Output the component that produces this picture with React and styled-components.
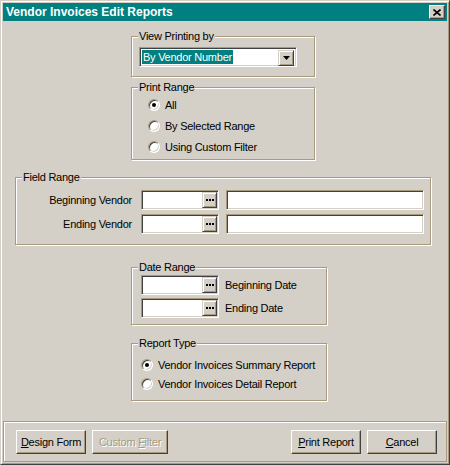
import React from "react";
import styled, { createGlobalStyle } from "styled-components";

const FACE = "#d4d0c8";
const SHADOW = "#a89a7e";
const DARK = "#404040";

const GlobalStyle = createGlobalStyle`
  html, body {
    margin: 0;
    padding: 0;
    background: ${FACE};
  }
  * {
    box-sizing: border-box;
  }
  body {
    font-family: "Liberation Sans", Arial, sans-serif;
    font-size: 11px;
    letter-spacing: -0.25px;
    color: #000;
  }
`;

const Window = styled.div`
  width: 450px;
  height: 465px;
  background: ${FACE};
  border: 1px solid;
  border-color: ${FACE} ${DARK} ${DARK} ${FACE};
  box-shadow: inset 1px 1px #fff, inset -1px -1px ${SHADOW};
  padding: 2px;
  display: flex;
  flex-direction: column;
`;

const TitleBar = styled.div`
  height: 18px;
  flex: none;
  background: #008080;
  display: flex;
  align-items: center;
  padding: 0 2px 0 3px;
`;

const Title = styled.div`
  color: #fff;
  font-weight: bold;
  font-size: 12px;
  letter-spacing: 0;
  line-height: 14px;
`;

const CloseButton = styled.div`
  margin-left: auto;
  width: 16px;
  height: 14px;
  background: ${FACE};
  border: 1px solid;
  border-color: #fff ${DARK} ${DARK} #fff;
  box-shadow: inset -1px -1px ${SHADOW};
  display: flex;
  align-items: center;
  justify-content: center;
`;

const Body = styled.div`
  flex: 1;
  display: flex;
  flex-direction: column;
  align-items: flex-start;
`;

const Group = styled.div`
  position: relative;
  flex: none;
  margin-left: ${({ $left }) => $left}px;
  margin-top: ${({ $top }) => $top}px;
  width: ${({ $width }) => $width}px;
  height: ${({ $height }) => $height}px;
  border: 1px solid ${SHADOW};
  box-shadow: inset 1px 1px #fff, 1px 1px #fff;
  padding: ${({ $pad }) => $pad};
  display: flex;
  flex-direction: column;
  gap: ${({ $gap }) => $gap || 0}px;
`;

const Legend = styled.span`
  position: absolute;
  top: -7px;
  left: 6px;
  padding: 0 1px;
  line-height: 13px;
  background: ${FACE};
`;

const Combo = styled.div`
  width: 158px;
  height: 20px;
  background: #fff;
  border: 1px solid;
  border-color: ${SHADOW} #fff #fff ${SHADOW};
  box-shadow: inset 1px 1px ${DARK}, inset -1px -1px ${FACE};
  padding: 2px;
  display: flex;
  align-items: flex-start;
`;

const Selected = styled.span`
  background: #008080;
  color: #fff;
  line-height: 14px;
  height: 14px;
  padding: 0 1px;
`;

const RaisedButton = styled.div`
  flex: none;
  width: ${({ $w }) => $w}px;
  height: 16px;
  margin-left: auto;
  margin-top: ${({ $mt }) => $mt || 0}px;
  background: ${FACE};
  border: 1px solid;
  border-color: ${FACE} ${DARK} ${DARK} ${FACE};
  box-shadow: inset 1px 1px #fff, inset -1px -1px ${SHADOW};
  display: flex;
  align-items: center;
  justify-content: center;
`;

const RadioRow = styled.div`
  display: flex;
  align-items: center;
  height: ${({ $h }) => $h}px;
  gap: 5px;
`;

const RadioCircle = styled.span`
  position: relative;
  flex: none;
  width: 12px;
  height: 12px;
  border-radius: 50%;
  background: #fff;
  border: 1px solid;
  border-color: ${SHADOW} #fff #fff ${SHADOW};
  box-shadow: inset 1px 1px ${DARK}, inset -1px -1px ${FACE};

  &::after {
    content: "";
    display: ${({ $checked }) => ($checked ? "block" : "none")};
    position: absolute;
    left: 3px;
    top: 3px;
    width: 4px;
    height: 4px;
    border-radius: 50%;
    background: #000;
  }
`;

const FieldRow = styled.div`
  display: flex;
  align-items: center;
  height: 20px;
`;

const RowLabel = styled.span`
  width: ${({ $width }) => $width}px;
  text-align: right;
  margin-right: 9px;
`;

const SideLabel = styled.span`
  margin-left: 6px;
`;

const TextBox = styled.div`
  flex: none;
  width: ${({ $width }) => $width}px;
  height: 20px;
  margin-left: ${({ $ml }) => $ml || 0}px;
  background: #fff;
  border: 1px solid;
  border-color: ${SHADOW} #fff #fff ${SHADOW};
  box-shadow: inset 1px 1px ${DARK}, inset -1px -1px ${FACE};
  padding: 1px 1px 1px 0;
  display: flex;
`;

const Footer = styled.div`
  height: 41px;
  flex: none;
  border: 1px solid ${SHADOW};
  box-shadow: inset 1px 1px #fff;
  padding: 8px 9px 0 12px;
  display: flex;
  gap: 6px;
`;

const PushButton = styled.div`
  width: ${({ $w }) => $w}px;
  height: 24px;
  margin-left: ${({ $push }) => ($push ? "auto" : "0")};
  background: ${FACE};
  border: 1px solid;
  border-color: #fff ${DARK} ${DARK} #fff;
  box-shadow: inset -1px -1px ${SHADOW};
  display: flex;
  align-items: center;
  justify-content: center;
  color: ${({ $disabled }) => ($disabled ? SHADOW : "#000")};
  text-shadow: ${({ $disabled }) => ($disabled ? "1px 1px #fff" : "none")};
`;

const DropArrow = () => (
  <svg width="7" height="4" viewBox="0 0 7 4">
    <path d="M0 0h7L3.5 4z" fill="#000" />
  </svg>
);

const Dots = () => (
  <svg width="8" height="2" viewBox="0 0 8 2">
    <rect x="0" y="0" width="2" height="2" fill="#000" />
    <rect x="3" y="0" width="2" height="2" fill="#000" />
    <rect x="6" y="0" width="2" height="2" fill="#000" />
  </svg>
);

const CloseGlyph = () => (
  <svg width="8" height="7" viewBox="0 0 8 7">
    <path d="M0.5 0.5L7.5 6.5M7.5 0.5L0.5 6.5" stroke="#000" strokeWidth="1.6" />
  </svg>
);

const LookupBox = ({ width = 78 }) => (
  <TextBox $width={width}>
    <RaisedButton $w={15} $mt={0}>
      <Dots />
    </RaisedButton>
  </TextBox>
);

const Radio = ({ checked, label, h }) => (
  <RadioRow $h={h}>
    <RadioCircle $checked={checked} />
    <span>{label}</span>
  </RadioRow>
);

export default function App() {
  return (
    <>
      <GlobalStyle />
      <Window>
        <TitleBar>
          <Title>Vendor Invoices Edit Reports</Title>
          <CloseButton>
            <CloseGlyph />
          </CloseButton>
        </TitleBar>

        <Body>
          <Group $left={128} $top={15} $width={184} $height={41} $pad="10px 0 0 7px">
            <Legend>View Printing by</Legend>
            <Combo>
              <Selected>By Vendor Number</Selected>
              <RaisedButton $w={16}>
                <DropArrow />
              </RaisedButton>
            </Combo>
          </Group>

          <Group $left={128} $top={10} $width={184} $height={73} $pad="7px 0 0 16px" $gap={1}>
            <Legend>Print Range</Legend>
            <Radio h={20} checked label="All" />
            <Radio h={20} label="By Selected Range" />
            <Radio h={20} label="Using Custom Filter" />
          </Group>

          <Group $left={12} $top={17} $width={416} $height={68} $pad="12px 0 0 0" $gap={4}>
            <Legend>Field Range</Legend>
            <FieldRow>
              <RowLabel $width={116}>Beginning Vendor</RowLabel>
              <LookupBox />
              <TextBox $width={198} $ml={7} />
            </FieldRow>
            <FieldRow>
              <RowLabel $width={116}>Ending Vendor</RowLabel>
              <LookupBox />
              <TextBox $width={198} $ml={7} />
            </FieldRow>
          </Group>

          <Group $left={128} $top={22} $width={196} $height={58} $pad="7px 0 0 9px" $gap={3}>
            <Legend>Date Range</Legend>
            <FieldRow>
              <LookupBox />
              <SideLabel>Beginning Date</SideLabel>
            </FieldRow>
            <FieldRow>
              <LookupBox />
              <SideLabel>Ending Date</SideLabel>
            </FieldRow>
          </Group>

          <Group $left={128} $top={18} $width={196} $height={58} $pad="11px 0 0 9px">
            <Legend>Report Type</Legend>
            <Radio h={19} checked label="Vendor Invoices Summary Report" />
            <Radio h={19} label="Vendor Invoices Detail Report" />
          </Group>
        </Body>

        <Footer>
          <PushButton $w={70}>
            <span>
              <u>D</u>esign Form
            </span>
          </PushButton>
          <PushButton $w={76} $disabled>
            <span>
              Custom <u>F</u>ilter
            </span>
          </PushButton>
          <PushButton $w={70} $push>
            <span>
              <u>P</u>rint Report
            </span>
          </PushButton>
          <PushButton $w={70}>
            <span>
              <u>C</u>ancel
            </span>
          </PushButton>
        </Footer>
      </Window>
    </>
  );
}
